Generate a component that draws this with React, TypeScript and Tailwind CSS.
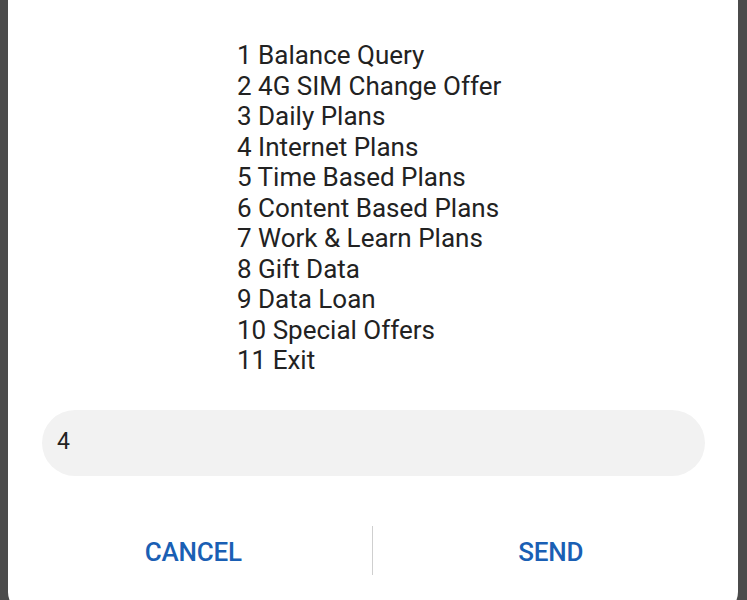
const menuItems = [
  "1 Balance Query",
  "2 4G SIM Change Offer",
  "3 Daily Plans",
  "4 Internet Plans",
  "5 Time Based Plans",
  "6 Content Based Plans",
  "7 Work & Learn Plans",
  "8 Gift Data",
  "9 Data Loan",
  "10 Special Offers",
  "11 Exit",
]

export default function App() {
  return (
    <div
      className="h-[600px] w-full overflow-hidden bg-[#4b4b4b] pl-[8px] pr-[9px]"
      style={{ fontFamily: "Roboto, 'Noto Sans', sans-serif" }}
    >
      <div className="flex h-[614px] flex-col rounded-b-[22px] bg-white">
        {/* USSD menu text */}
        <div className="pl-[229px] pt-[40px] text-[26px] leading-[30.5px] text-[#222222]">
          {menuItems.map((item) => (
            <div key={item} className="whitespace-pre">{item}</div>
          ))}
        </div>

        {/* Reply input */}
        <div className="ml-[34px] mr-[33px] mt-[34px] flex h-[66px] items-center rounded-full bg-[#f2f2f2] pl-[15px] text-[23px] text-[#222222]">
          4
        </div>

        {/* Actions */}
        <div className="mt-[50px] flex h-[49px] items-stretch pl-[7px] pr-[9px]">
          <button className="flex flex-1 items-center justify-center pt-[4px] text-[26px] font-medium tracking-[-0.2px] text-[#1a5fb4]">
            CANCEL
          </button>
          <div className="w-px bg-[#cfcfcf]" />
          <button className="flex flex-1 items-center justify-center pt-[4px] text-[26px] font-medium tracking-[-0.2px] text-[#1a5fb4]">
            SEND
          </button>
        </div>
      </div>
    </div>
  )
}
